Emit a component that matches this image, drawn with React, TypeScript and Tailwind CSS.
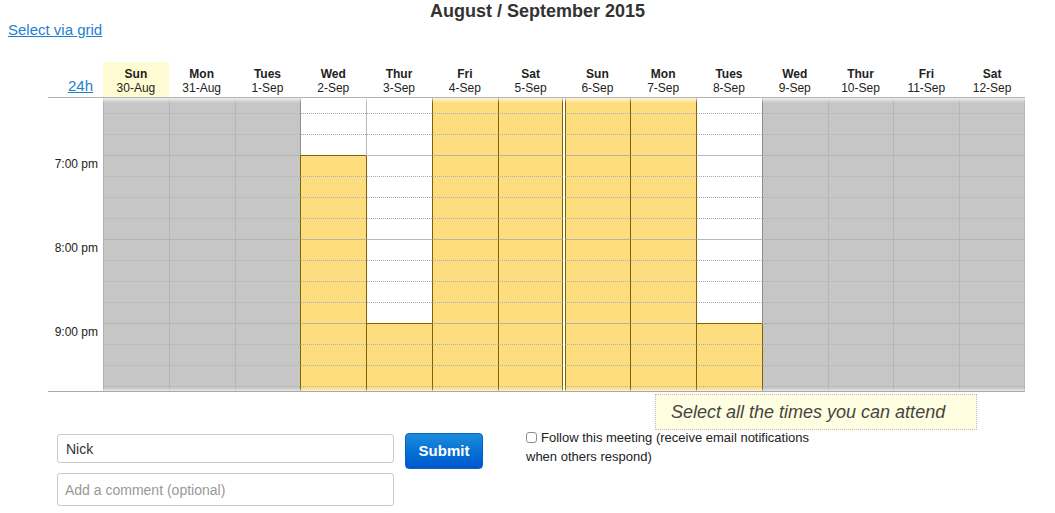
import React from 'react';

type Kind = 'g' | 'w' | 'y';

const days = [
  ['Sun', '30-Aug'], ['Mon', '31-Aug'], ['Tues', '1-Sep'], ['Wed', '2-Sep'], ['Thur', '3-Sep'], ['Fri', '4-Sep'], ['Sat', '5-Sep'],
  ['Sun', '6-Sep'], ['Mon', '7-Sep'], ['Tues', '8-Sep'], ['Wed', '9-Sep'], ['Thur', '10-Sep'], ['Fri', '11-Sep'], ['Sat', '12-Sep'],
];

// off = greyed out day, yFrom = first selected slot (99 = none)
const cols = [
  { off: true, yFrom: 99 }, { off: true, yFrom: 99 }, { off: true, yFrom: 99 },
  { off: false, yFrom: 3 }, { off: false, yFrom: 11 }, { off: false, yFrom: 0 }, { off: false, yFrom: 0 },
  { off: false, yFrom: 0 }, { off: false, yFrom: 0 }, { off: false, yFrom: 11 },
  { off: true, yFrom: 99 }, { off: true, yFrom: 99 }, { off: true, yFrom: 99 }, { off: true, yFrom: 99 },
];

// slots start at 6:15 pm, 15 minutes each
const slots = Array.from({ length: 15 }, (_, i) => 6 * 60 + 15 + i * 15);

const kindOf = (c: number, s: number): Kind => {
  const col = cols[c];
  if (col.off) return 'g';
  return s >= col.yFrom ? 'y' : 'w';
};

const BG = { g: 'bg-[#c6c6c6]', w: 'bg-white', y: 'bg-[#fedd7f]' };
const SOLID = { g: 'border-b-[#b3b3b3]', w: 'border-b-[#b8b8b8]', y: 'border-b-[#b9b3a3]' };
const DOTTED = {
  g: 'border-b-[#b1b1b1] [border-bottom-style:dotted]',
  w: 'border-b-[#a6a6a6] [border-bottom-style:dotted]',
  y: 'border-b-[#a7aec6] [border-bottom-style:dotted]',
};

const leftClass = (c: number, s: number) => {
  const cur = kindOf(c, s);
  const prev = c % 7 === 0 ? null : kindOf(c - 1, s);
  if (cur === 'y' || prev === 'y') return 'border-l-[#7f6100]';
  if (prev === null) return 'border-l-[#b0b0b0]';
  if (prev !== cur) return 'border-l-[#8e8e8e]';
  return cur === 'g' ? 'border-l-[#b6b6b6]' : 'border-l-[#bcbcbc]';
};

const Cell = ({ c, s }: { c: number; s: number }) => {
  const k = kindOf(c, s);
  const below = s + 1 < slots.length ? kindOf(c, s + 1) : k;
  const hourEnd = slots[s] % 60 === 45;
  let bottom = hourEnd ? SOLID[k] : DOTTED[k];
  if (k !== 'y' && below === 'y') bottom = 'border-b-[#7f6100]';
  const right = c % 7 === 6 ? (k === 'y' ? 'border-r border-r-[#7f6100]' : 'border-r border-r-[#b6b6b6]') : '';
  return <div className={`h-[21px] border-l border-b ${BG[k]} ${bottom} ${leftClass(c, s)} ${right}`} />;
};

const Week = ({ start }: { start: number }) => (
  <div className="flex flex-1">
    {[0, 1, 2, 3, 4, 5, 6].map((i) => (
      <div key={i} className="flex flex-1 flex-col">
        {slots.map((_, s) => (
          <Cell key={s} c={start + i} s={s} />
        ))}
      </div>
    ))}
  </div>
);

const HeadWeek = ({ start }: { start: number }) => (
  <div className="flex flex-1">
    {days.slice(start, start + 7).map(([d, date], i) => (
      <div
        key={i}
        className={`flex-1 pt-[5px] text-center text-[12px] leading-[14px] text-[#222] ${start + i === 0 ? 'bg-[#fffbd2]' : ''}`}
      >
        <div className="font-bold">{d}</div>
        <div>{date}</div>
      </div>
    ))}
  </div>
);

export default function App() {
  return (
    <div className="relative h-[513px] w-[1055px] overflow-hidden bg-white font-['Liberation_Sans',Arial,sans-serif] text-[#222]">
      <div className="h-[22px] pl-[20px] pt-[1px] text-center text-[18px] font-bold leading-[21px] text-[#333]">
        August / September 2015
      </div>
      <a href="#" className="ml-[8px] block w-fit text-[15px] leading-[16px] text-[#1d7fd0] underline">
        Select via grid
      </a>

      <div className="ml-[48px] mt-[24px] w-[977px]">
        <div className="flex h-[36px] border-b border-[#b3b3b3]">
          <div className="flex w-[55px] items-end justify-end pb-[3px] pr-[10px]">
            <a href="#" className="text-[15px] leading-[16px] text-[#1d7fd0] underline">24h</a>
          </div>
          <HeadWeek start={0} />
          <div className="w-[1px]" />
          <HeadWeek start={7} />
        </div>

        <div className="relative h-[294px] overflow-hidden border-b border-[#a9a9a9]">
          <div className="-mt-[5px] flex">
            <div className="flex w-[55px] flex-col">
              {slots.map((m, s) => (
                <div key={s} className="h-[21px] pr-[5px] pt-[1px] text-right text-[12px] leading-[14px] text-[#222]">
                  {m % 60 === 0 ? `${Math.floor(m / 60)}:00 pm` : ''}
                </div>
              ))}
            </div>
            <Week start={0} />
            <div className="w-[1px]" />
            <Week start={7} />
          </div>
          <div className="pointer-events-none absolute inset-x-0 top-0 h-[5px] bg-linear-to-b from-white/70 to-white/0" />
          <div className="pointer-events-none absolute inset-x-0 bottom-0 h-[3px] bg-linear-to-b from-white/0 to-white/60" />
        </div>
      </div>

      <div className="ml-[655px] mt-[2px] flex h-[36px] w-[322px] items-center border border-dotted border-[#bdbdbd] bg-[#fffee0] pl-[15px] text-[18px] italic text-[#444]">
        Select all the times you can attend
      </div>

      <div className="flex items-start">
        <div className="ml-[57px] flex w-[337px] flex-col">
          <input
            defaultValue="Nick"
            className="mt-[4px] h-[29px] rounded-[3px] border border-[#cccccc] px-[8px] text-[14px] text-[#333] outline-none"
          />
          <input
            placeholder="Add a comment (optional)"
            className="mt-[10px] h-[33px] rounded-[3px] border border-[#cccccc] px-[7px] text-[14px] text-[#333] outline-none placeholder:text-[#999]"
          />
        </div>
        <button
          type="button"
          className="ml-[11px] mt-[3px] h-[36px] w-[78px] rounded-[4px] border border-[#0b5fbf] bg-linear-to-b from-[#1c8cdb] to-[#0056cf] text-[15px] font-bold text-white"
        >
          Submit
        </button>
        <div className="-mt-[2px] ml-[43px] w-[300px] text-[13px] leading-[19px] text-[#222]">
          <span className="mr-[4px] inline-block h-[11px] w-[11px] translate-y-[1px] rounded-[3px] border border-[#8e8e8e] bg-white" />
          Follow this meeting (receive email notifications when others respond)
        </div>
      </div>
    </div>
  );
}
